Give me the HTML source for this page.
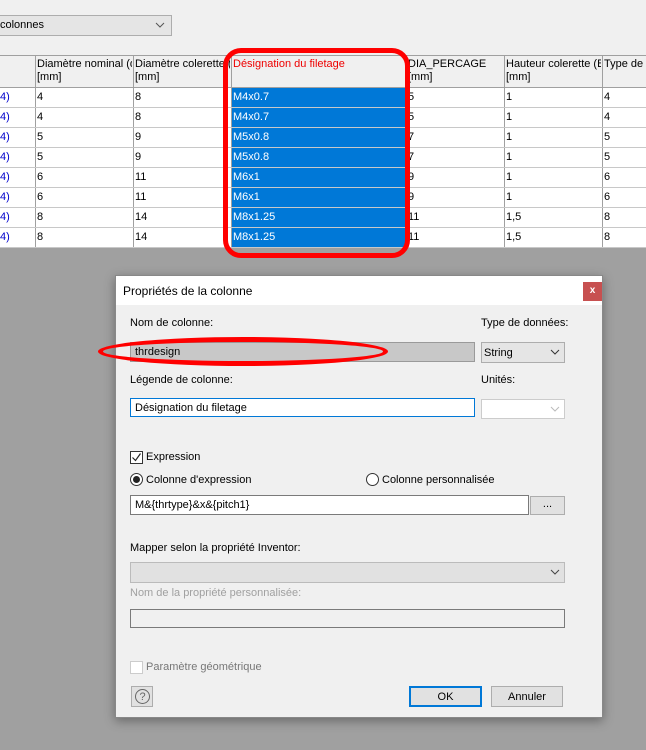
<!DOCTYPE html><html><head><meta charset="utf-8"><style>
body{margin:0;width:646px;height:750px;position:relative;overflow:hidden;background:#a0a0a0;font-family:"Liberation Sans",sans-serif;font-size:11px;color:#000}
.a{position:absolute;box-sizing:border-box}
.t{position:absolute;white-space:nowrap}
</style></head><body>
<div class="a" style="left:0;top:0;width:646px;height:55px;background:#f0f0f0"></div>
<div class="a" style="left:-2px;top:15px;width:174px;height:21px;border:1px solid #adadad;background:#e5e5e5"></div>
<div class="t" style="left:0;top:19px">colonnes</div>
<svg class="a" style="left:155px;top:21px" width="10" height="8"><path d="M1 2l4 4 4-4" fill="none" stroke="#555"/></svg>
<div class="a" style="left:0;top:55px;width:646px;height:193px;background:#fff"></div>
<div class="a" style="left:0;top:55px;width:646px;height:33px;background:#f0f0f0;border-bottom:1px solid #a0a0a0;border-top:1px solid #a0a0a0"></div>
<div id="tb"></div>
<script>
let h='';const cols=[35,133,231,406,504,602];
cols.forEach(x=>h+=`<div class="a" style="left:${x}px;top:55px;width:1px;height:193px;background:#a0a0a0"></div>`);
h+=`<div class="a" style="left:232px;top:88px;width:174px;height:160px;background:#0078d7"></div>`;
const d=[["4","8","M4x0.7","5","1","4"],["4","8","M4x0.7","5","1","4"],["5","9","M5x0.8","7","1","5"],["5","9","M5x0.8","7","1","5"],["6","11","M6x1","9","1","6"],["6","11","M6x1","9","1","6"],["8","14","M8x1.25","11","1,5","8"],["8","14","M8x1.25","11","1,5","8"]];
d.forEach((r,i)=>{const y=88+i*20;h+=`<div class="a" style="left:0;top:${y+19}px;width:646px;height:1px;background:#c8c8c8"></div>`;
h+=`<div class="t" style="left:0;top:${y+3}px;color:#00c">4)</div>`;
r.forEach((v,j)=>h+=`<div class="t" style="left:${cols[j]+2}px;top:${y+3}px;${j==2?'color:#fff;':''}">${v}</div>`)});
document.getElementById('tb').outerHTML=h;
</script>
<div class="t" style="left:37px;top:58px;line-height:13px;width:95px;overflow:hidden">Diamètre nominal (d<br>[mm]</div>
<div class="t" style="left:135px;top:58px;line-height:13px;width:95px;overflow:hidden">Diamètre colerette (<br>[mm]</div>
<div class="t" style="left:233px;top:58px;color:#e00">Désignation du filetage</div>
<div class="t" style="left:408px;top:58px;line-height:13px">DIA_PERCAGE<br>[mm]</div>
<div class="t" style="left:506px;top:58px;line-height:13px;width:95px;overflow:hidden">Hauteur colerette (B<br>[mm]</div>
<div class="t" style="left:604px;top:58px">Type de</div>
<div class="a" style="left:223px;top:48px;width:187px;height:210px;border:5px solid #f00;border-radius:18px"></div>

<div class="a" style="left:115px;top:275px;width:488px;height:443px;background:#f0f0f0;border:1px solid #888;box-shadow:0 3px 10px rgba(0,0,0,.35)"></div>
<div class="a" style="left:116px;top:276px;width:486px;height:29px;background:#fff"></div>
<div class="t" style="left:123px;top:284px;font-size:12px">Propriétés de la colonne</div>
<div class="a" style="left:583px;top:282px;width:19px;height:19px;background:#c75050;color:#fff;font-size:10px;text-align:center;line-height:18px;font-weight:bold">x</div>
<div class="t" style="left:130px;top:317px">Nom de colonne:</div>
<div class="t" style="left:481px;top:317px">Type de données:</div>
<div class="a" style="left:130px;top:342px;width:345px;height:20px;background:#c8c8c8;border:1px solid #9a9a9a"></div>
<div class="t" style="left:135px;top:346px">thrdesign</div>
<div class="a" style="left:481px;top:342px;width:84px;height:21px;background:#e5e5e5;border:1px solid #adadad"></div>
<div class="t" style="left:484px;top:347px">String</div>
<svg class="a" style="left:550px;top:348px" width="10" height="8"><path d="M1 2l4 4 4-4" fill="none" stroke="#333"/></svg>
<div class="a" style="left:98px;top:337px;width:290px;height:29px;border:5px solid #f00;border-radius:50%"></div>
<div class="t" style="left:130px;top:374px">Légende de colonne:</div>
<div class="t" style="left:481px;top:374px">Unités:</div>
<div class="a" style="left:130px;top:398px;width:345px;height:19px;background:#fff;border:1px solid #0078d7"></div>
<div class="t" style="left:135px;top:402px">Désignation du filetage</div>
<div class="a" style="left:481px;top:399px;width:84px;height:20px;background:#fff;border:1px solid #ccc"></div>
<svg class="a" style="left:550px;top:405px" width="10" height="8"><path d="M1 2l4 4 4-4" fill="none" stroke="#bbb"/></svg>
<div class="a" style="left:130px;top:451px;width:13px;height:13px;background:#fff;border:1px solid #333"></div>
<svg class="a" style="left:131px;top:452px" width="11" height="11"><path d="M1.5 5.5l3 3 5-7" fill="none" stroke="#222" stroke-width="1.2"/></svg>
<div class="t" style="left:146px;top:451px">Expression</div>
<div class="a" style="left:130px;top:473px;width:13px;height:13px;border:1px solid #333;border-radius:50%;background:#fff"></div>
<div class="a" style="left:133px;top:476px;width:7px;height:7px;border-radius:50%;background:#222"></div>
<div class="t" style="left:146px;top:474px">Colonne d'expression</div>
<div class="a" style="left:366px;top:473px;width:13px;height:13px;border:1px solid #333;border-radius:50%;background:#fff"></div>
<div class="t" style="left:382px;top:474px">Colonne personnalisée</div>
<div class="a" style="left:130px;top:495px;width:399px;height:20px;background:#fff;border:1px solid #7a7a7a"></div>
<div class="t" style="left:135px;top:499px">M&amp;{thrtype}&amp;x&amp;{pitch1}</div>
<div class="a" style="left:530px;top:496px;width:35px;height:19px;background:#e1e1e1;border:1px solid #adadad;text-align:center;line-height:14px">...</div>
<div class="t" style="left:130px;top:542px">Mapper selon la propriété Inventor:</div>
<div class="a" style="left:130px;top:562px;width:435px;height:21px;background:#e1e1e1;border:1px solid #bbb"></div>
<svg class="a" style="left:550px;top:568px" width="10" height="8"><path d="M1 2l4 4 4-4" fill="none" stroke="#444"/></svg>
<div class="t" style="left:130px;top:587px;color:#a0a0a0">Nom de la propriété personnalisée:</div>
<div class="a" style="left:130px;top:609px;width:435px;height:19px;background:#f0f0f0;border:1px solid #7a7a7a"></div>
<div class="a" style="left:130px;top:661px;width:13px;height:13px;background:#fff;border:1px solid #ccc"></div>
<div class="t" style="left:146px;top:661px;color:#777">Paramètre géométrique</div>
<div class="a" style="left:131px;top:686px;width:22px;height:21px;background:#e1e1e1;border:1px solid #adadad"></div>
<div class="a" style="left:135px;top:689px;width:15px;height:15px;border:1px solid #666;border-radius:50%;text-align:center;font-size:11px;line-height:14px;color:#666">?</div>
<div class="a" style="left:409px;top:686px;width:73px;height:21px;background:#e1e1e1;border:2px solid #0078d7;text-align:center;line-height:19px">OK</div>
<div class="a" style="left:491px;top:686px;width:72px;height:21px;background:#e1e1e1;border:1px solid #adadad;text-align:center;line-height:21px">Annuler</div>
</body></html>
